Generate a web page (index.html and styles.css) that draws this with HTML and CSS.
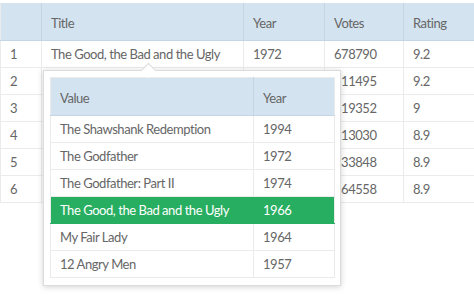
FILE: index.html
```html
<!DOCTYPE html>
<html lang="en">
<head>
    <meta charset="UTF-8">
    <title>Films</title>
    <link rel="stylesheet" href="styles.css">
</head>
<body>
<div class="page">
    <table class="grid">
        <colgroup>
            <col class="c-id">
            <col class="c-title">
            <col class="c-year">
            <col class="c-votes">
            <col class="c-rating">
        </colgroup>
        <thead>
            <tr><th></th><th>Title</th><th>Year</th><th>Votes</th><th>Rating</th></tr>
        </thead>
        <tbody>
            <tr><td>1</td><td>The Good, the Bad and the Ugly</td><td>1972</td><td>678790</td><td>9.2</td></tr>
            <tr><td>2</td><td>The Godfather</td><td>1972</td><td>511495</td><td>9.2</td></tr>
            <tr><td>3</td><td>The Godfather: Part II</td><td>1974</td><td>319352</td><td>9</td></tr>
            <tr><td>4</td><td>The Good, the Bad and the Ugly</td><td>1966</td><td>213030</td><td>8.9</td></tr>
            <tr><td>5</td><td>My Fair Lady</td><td>1964</td><td>533848</td><td>8.9</td></tr>
            <tr><td>6</td><td>12 Angry Men</td><td>1957</td><td>164558</td><td>8.9</td></tr>
        </tbody>
    </table>

    <!-- suggest popup for the title editor -->
    <div class="popup">
        <div class="arrow"></div>
        <table class="list">
            <colgroup>
                <col class="c-value">
                <col class="c-year2">
            </colgroup>
            <thead>
                <tr><th>Value</th><th>Year</th></tr>
            </thead>
            <tbody>
                <tr><td>The Shawshank Redemption</td><td>1994</td></tr>
                <tr><td>The Godfather</td><td>1972</td></tr>
                <tr><td>The Godfather: Part II</td><td>1974</td></tr>
                <tr class="selected"><td>The Good, the Bad and the Ugly</td><td>1966</td></tr>
                <tr><td>My Fair Lady</td><td>1964</td></tr>
                <tr><td>12 Angry Men</td><td>1957</td></tr>
            </tbody>
        </table>
    </div>
</div>
</body>
</html>
```

FILE: styles.css
```css
body {
    margin: 0;
    font-family: Lato, "Liberation Sans", sans-serif;
    font-size: 13px;
    letter-spacing: -0.45px;
    color: #666;
    background: #fff;
}

.page {
    position: relative;
    height: 292px;
    padding-top: 3px;
}

table {
    border-collapse: collapse;
    table-layout: fixed;
}

th {
    background: #d3e3f0;
    font-weight: normal;
    text-align: left;
    height: 35px;
    padding: 2px 0 0 9px;
    border-right: 1px solid #c4d6e5;
    border-bottom: 1px solid #c4d6e5;
}

td {
    height: 26px;
    padding: 0 0 0 9px;
    border-right: 1px solid #ebebeb;
    border-bottom: 1px solid #ebebeb;
    white-space: nowrap;
    overflow: hidden;
}

.grid {
    width: 474px;
}

.grid td:first-child,
.grid th:first-child {
    border-left: 1px solid #ebebeb;
}

.c-id { width: 41px; }
.c-title { width: 202px; }
.c-year { width: 81px; }
.c-votes { width: 79px; }
.c-rating { width: 71px; }

.popup {
    position: absolute;
    left: 43px;
    top: 70px;
    width: 284px;
    padding: 6px 6px 7px 6px;
    background: #fff;
    border: 1px solid #dcdcdc;
    box-shadow: 0 1px 6px rgba(0, 0, 0, 0.18);
}

.arrow {
    position: absolute;
    left: 99px;
    top: -6px;
    width: 10px;
    height: 10px;
    background: #fff;
    border-left: 1px solid #dcdcdc;
    border-top: 1px solid #dcdcdc;
    transform: rotate(45deg);
}

.list {
    width: 284px;
    border: 1px solid #ebebeb;
}

.c-value { width: 203px; }
.c-year2 { width: 81px; }

.list th:last-child,
.list td:last-child {
    border-right: none;
}

.list .selected td {
    background: #27ae60;
    color: #fff;
    border-color: #27ae60;
}
```
